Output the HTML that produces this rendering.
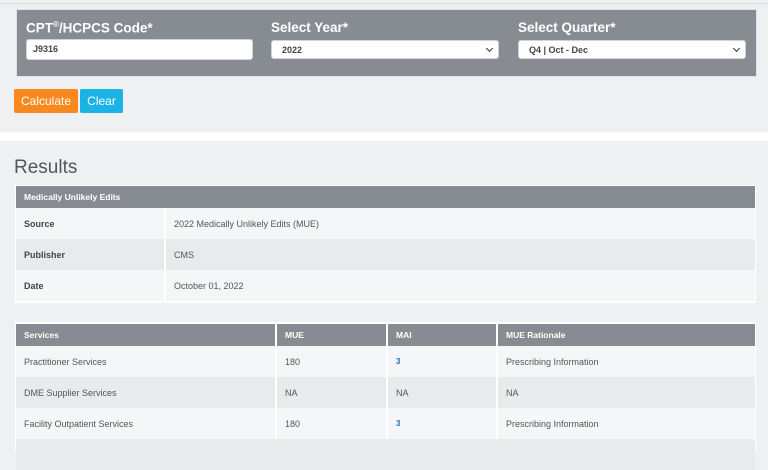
<!DOCTYPE html><html><head><style>
body{margin:0;width:768px;height:451px;overflow:hidden;background:#eff0f2;font-family:"Liberation Sans",sans-serif;position:relative}
.a{position:absolute}
.lbl{color:#fff;font-size:13.5px;font-weight:bold;top:20px}
.in{background:#fff;border:1px solid #d0d3d6;border-radius:3px;height:19px;font-size:9px;font-weight:bold;color:#444;line-height:19px;padding-left:6px;box-sizing:border-box;top:40px}
.chev{position:absolute;right:6px;top:5px;width:4px;height:4px;border-right:1.5px solid #333;border-bottom:1.5px solid #333;transform:rotate(45deg)}
table{border-collapse:collapse;font-size:9px;color:#555;table-layout:fixed}
td{padding:0 0 0 8px;height:31px;border-right:2px solid #fff;box-sizing:border-box}
th{background:#878c93;color:#fff;text-align:left;padding-left:8px;height:22px;font-size:8.5px;border-right:2px solid #fff;box-sizing:border-box}
tr.o td{background:#f5f6f7} tr.e td{background:#e9eaeb}
</style></head><body>
<div class="a" style="left:0;top:3px;width:768px;height:1px;background:#d8dadd"></div>
<div class="a" style="left:16px;top:9px;width:739px;height:66px;background:#878c93;border:1px solid #dfe1e3"></div>
<div class="a lbl" style="left:26px">CPT<sup style="font-size:8px">®</sup>/HCPCS Code*</div>
<div class="a lbl" style="left:271px">Select Year*</div>
<div class="a lbl" style="left:518px">Select Quarter*</div>
<div class="a in" style="left:26px;width:227px;height:21px;top:39px">J9316</div>
<div class="a in" style="left:271px;width:228px;padding-left:10px">2022<span class="chev"></span></div>
<div class="a in" style="left:518px;width:228px;padding-left:10px">Q4 | Oct - Dec<span class="chev"></span></div>
<div class="a" style="left:14px;top:89px;width:64px;height:24px;background:#f7891f;border-radius:2px;color:#fff;font-size:12px;line-height:24px;text-align:center">Calculate</div>
<div class="a" style="left:80px;top:89px;width:43px;height:24px;background:#1ab3e6;border-radius:2px;color:#fff;font-size:12px;line-height:24px;text-align:center">Clear</div>
<div class="a" style="left:0;top:132px;width:768px;height:9px;background:#fff"></div>
<div class="a" style="left:14px;top:157px;font-size:19px;color:#555">Results</div>
<div class="a" style="left:15px;top:185px;width:741px;height:118px;background:#fff"></div>
<table class="a" style="left:16px;top:186px;width:739px">
<col style="width:149px"><col>
<tr><th colspan="2" style="border:0">Medically Unlikely Edits</th></tr>
<tr class="o"><td style="font-weight:bold;color:#444">Source</td><td style="border:0">2022 Medically Unlikely Edits (MUE)</td></tr>
<tr class="e"><td style="font-weight:bold;color:#444">Publisher</td><td style="border:0">CMS</td></tr>
<tr class="o"><td style="font-weight:bold;color:#444">Date</td><td style="border:0">October 01, 2022</td></tr>
</table>
<div class="a" style="left:15px;top:322px;width:741px;height:130px;background:#fff"></div>
<table class="a" style="left:16px;top:324px;width:739px">
<col style="width:260px"><col style="width:111px"><col style="width:110px"><col>
<tr><th>Services</th><th>MUE</th><th>MAI</th><th style="border:0">MUE Rationale</th></tr>
<tr class="o"><td>Practitioner Services</td><td>180</td><td style="color:#2a6ebb;font-weight:bold;font-size:8px">3</td><td style="border:0">Prescribing Information</td></tr>
<tr class="e"><td>DME Supplier Services</td><td>NA</td><td>NA</td><td style="border:0">NA</td></tr>
<tr class="o"><td>Facility Outpatient Services</td><td>180</td><td style="color:#2a6ebb;font-weight:bold;font-size:8px">3</td><td style="border:0">Prescribing Information</td></tr>
<tr class="e"><td colspan="4" style="border:0"></td></tr>
</table>
</body></html>
